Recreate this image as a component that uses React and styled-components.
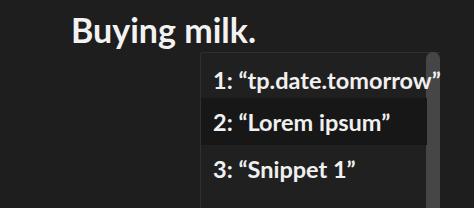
import React from "react";
import styled, { createGlobalStyle } from "styled-components";

const snippets = [
  { id: 1, text: "tp.date.tomorrow" },
  { id: 2, text: "Lorem ipsum" },
  { id: 3, text: "Snippet 1" },
];

const GlobalStyle = createGlobalStyle`
  html, body {
    margin: 0;
    padding: 0;
    background: #1e1e1e;
    overflow: hidden;
  }
  body {
    font-family: Lato, "Noto Sans", sans-serif;
  }
`;

const App = () => {
  const selected = 2;

  return (
    <Page>
      <GlobalStyle />
      <Title>Buying milk.</Title>
      <Suggest>
        <Scrollbar />
        {snippets.map((s) => (
          <Item key={s.id} active={s.id === selected}>
            {s.id}: “{s.text}”
          </Item>
        ))}
      </Suggest>
    </Page>
  );
};

const Page = styled.div`
  width: 474px;
  height: 208px;
  background: #1e1e1e;
  padding: 11px 0 0 71px;
  box-sizing: border-box;
`;

const Title = styled.h1`
  margin: 0;
  font-size: 34px;
  font-weight: 700;
  line-height: 38px;
  color: #f2f2f2;
`;

const Suggest = styled.div`
  position: relative;
  margin: 3px 0 0 129px;
  width: 240px;
  height: 160px;
  box-sizing: border-box;
  background: #202020;
  border: 1px solid #303030;
  border-right: none;
  border-bottom: none;
  border-radius: 3px 0 0 0;
  display: flex;
  flex-direction: column;
`;

const Scrollbar = styled.div`
  position: absolute;
  top: -1px;
  right: 0;
  bottom: 0;
  width: 14px;
  background: #464646;
  border-radius: 7px 7px 0 0;
`;

const Item = styled.div`
  position: relative;
  z-index: 1;
  flex: none;
  height: 47px;
  width: 226px;
  padding-left: 12px;
  box-sizing: border-box;
  display: flex;
  align-items: center;
  font-size: 23.5px;
  font-weight: 700;
  color: #f0f0f0;
  white-space: nowrap;
  background: ${(p) => (p.active ? "#171717" : "transparent")};

  &:nth-child(2) {
    height: 45px;
    padding-top: 8px;
  }
`;

export default App;
